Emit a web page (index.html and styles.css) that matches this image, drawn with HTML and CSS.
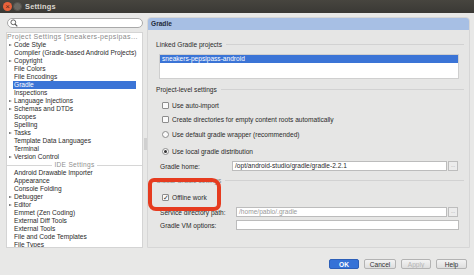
FILE: index.html
```html
<!DOCTYPE html>
<html lang="en">
<head>
  <meta charset="UTF-8">
  <title>Settings</title>
  <link rel="stylesheet" href="styles.css">
</head>
<body>

  <div class="titlebar">
    <span class="wbtn close">&times;</span>
    <span class="wbtn min"></span>
    <span class="title">Settings</span>
  </div>

  <div class="main">
    <div class="side">
      <div class="search">
        <svg width="8" height="8" viewBox="0 0 8 8"><circle cx="3.3" cy="3.3" r="2.4" fill="none" stroke="#555" stroke-width="0.9"/><path d="M5 5 L7.3 7.3" stroke="#555" stroke-width="1.1"/></svg>
      </div>
      <div class="tree">
        <div class="row head">Project Settings [sneakers-pepsipas...</div>
        <div class="row arrow">Code Style</div>
        <div class="row">Compiler (Gradle-based Android Projects)</div>
        <div class="row arrow">Copyright</div>
        <div class="row">File Colors</div>
        <div class="row">File Encodings</div>
        <div class="row sel">Gradle</div>
        <div class="row">Inspections</div>
        <div class="row arrow">Language Injections</div>
        <div class="row arrow">Schemas and DTDs</div>
        <div class="row">Scopes</div>
        <div class="row">Spelling</div>
        <div class="row arrow">Tasks</div>
        <div class="row">Template Data Languages</div>
        <div class="row">Terminal</div>
        <div class="row arrow">Version Control</div>
        <div class="row group"><span>IDE Settings</span></div>
        <div class="row">Android Drawable Importer</div>
        <div class="row">Appearance</div>
        <div class="row">Console Folding</div>
        <div class="row arrow">Debugger</div>
        <div class="row arrow">Editor</div>
        <div class="row">Emmet (Zen Coding)</div>
        <div class="row">External Diff Tools</div>
        <div class="row">External Tools</div>
        <div class="row">File and Code Templates</div>
        <div class="row">File Types</div>
      </div>
      <div class="scroll-thumb"></div>
    </div>

    <div class="panel">
      <div class="panel-head">Gradle</div>
      <div class="panel-body">
        <div class="section">Linked Gradle projects</div>
        <div class="list">
          <div class="list-item">sneakers-pepsipass-android</div>
        </div>

        <div class="section second">Project-level settings</div>
        <div class="opt o1"><span class="box"></span>Use auto-import</div>
        <div class="opt o2"><span class="box"></span>Create directories for empty content roots automatically</div>
        <div class="opt o3"><span class="radio"></span>Use default gradle wrapper (recommended)</div>
        <div class="opt o4"><span class="radio on"></span>Use local gradle distribution</div>
        <div class="field-row home">
          <span class="label">Gradle home:</span>
          <span class="input">/opt/android-studio/gradle/gradle-2.2.1</span>
          <span class="dots">...</span>
        </div>

        <div class="section third">Global Gradle settings</div>
        <div class="opt o5"><span class="box checked">&#10003;</span>Offline work</div>
        <div class="field-row svc">
          <span class="label">Service directory path:</span>
          <span class="input muted">/home/pablo/.gradle</span>
          <span class="dots">...</span>
        </div>
        <div class="field-row vm">
          <span class="label">Gradle VM options:</span>
          <span class="input wide"></span>
        </div>
      </div>
    </div>
  </div>

  <div class="footer">
    <button class="btn ok">OK</button>
    <button class="btn">Cancel</button>
    <button class="btn disabled">Apply</button>
    <button class="btn">Help</button>
  </div>

  <div class="mark"></div>

</body>
</html>
```

FILE: styles.css
```css
* { box-sizing: border-box; margin: 0; padding: 0; }
body {
  font-family: 'Liberation Sans', sans-serif;
  font-size: 6.6px;
  color: #2a2a2a;
  background: #e8e8e7;
  width: 474px;
  height: 275px;
  overflow: hidden;
  position: relative;
}
.titlebar {
  height: 13px;
  background: linear-gradient(#47453f, #3a3935);
  display: flex;
  align-items: center;
  padding-left: 3px;
  gap: 1px;
}
.wbtn {
  width: 9px;
  height: 9px;
  border-radius: 50%;
  display: flex;
  justify-content: center;
  align-items: center;
  font-size: 8px;
  line-height: 1;
  color: #5a2a1a;
}
.wbtn.close { background: #e9623b; }
.wbtn.min { background: #6a6862; border: 1px solid #55534e; }
.title {
  margin-left: 2px;
  color: #dcd9d2;
  font-weight: 700;
  font-size: 7.4px;
  letter-spacing: 0.2px;
}
.main {
  display: flex;
  padding: 4px 4px 0 6px;
  gap: 4px;
  height: 235px;
}
.side {
  width: 137px;
  display: flex;
  flex-direction: column;
  position: relative;
}
.search {
  height: 10px;
  margin: 1px 0 0 1px;
  background: #fff;
  border: 1px solid #a9a9a9;
  border-radius: 5px;
  display: flex;
  align-items: center;
  padding-left: 2px;
}
.tree {
  margin-top: 4px;
  background: #fff;
  border: 1px solid #d4d4d4;
  height: 217px;
  overflow: hidden;
}
.row {
  height: 8px;
  line-height: 8px;
  padding-left: 7px;
  white-space: nowrap;
  position: relative;
}
.row.head {
  padding-left: 0;
  color: #8a8a8a;
  font-size: 7px;
  letter-spacing: 0.35px;
}
.row.arrow::before {
  content: "";
  position: absolute;
  left: 2px;
  top: 2.5px;
  border-left: 3px solid #666;
  border-top: 1.6px solid transparent;
  border-bottom: 1.6px solid transparent;
}
.row.sel {
  background: #3b74d6;
  color: #fff;
  margin: 0 6px 0 6px;
  padding-left: 1px;
}
.row.group {
  display: flex;
  align-items: center;
  padding-left: 0;
  color: #909090;
  letter-spacing: 0.3px;
}
.row.group::before, .row.group::after {
  content: "";
  flex: 1;
  height: 1px;
  background: #d6d6d6;
}
.row.group span { padding: 0 2px; }
.scroll-thumb {
  position: absolute;
  right: -4px;
  top: 121px;
  width: 3px;
  height: 12px;
  background: #d0d0d0;
}
.panel {
  width: 323px;
  height: 231px;
  border: 1px solid #d6d6d6;
  border-radius: 4px 4px 0 0;
  background: #e6e6e5;
}
.panel-head {
  height: 12px;
  line-height: 12px;
  background: #a7bfe4;
  border-radius: 3px 3px 0 0;
  font-weight: 700;
  padding-left: 3px;
  color: #1f2a3a;
}
.panel-body { padding: 10px 5px 0 8px; }
.section {
  display: flex;
  align-items: center;
  height: 8px;
  gap: 4px;
  white-space: nowrap;
}
.section::after {
  content: "";
  flex: 1;
  height: 1px;
  background: #d2d2d2;
}
.section.second { margin-top: 6px; }
.section.third { margin-top: 5px; color: #8b8b8b; }
.list {
  margin: 6px 5px 0 3px;
  height: 25px;
  background: #fff;
  border: 1px solid #cfcfcf;
}
.list-item {
  height: 8px;
  line-height: 8px;
  background: #3b74d6;
  color: #fff;
  padding-left: 2px;
}
.opt {
  display: flex;
  align-items: center;
  height: 9px;
  padding-left: 6px;
  gap: 3px;
}
.o1 { margin-top: 8px; }
.o2 { margin-top: 5px; }
.o3 { margin-top: 6px; }
.o4 { margin-top: 8px; }
.o5 { margin-top: 9px; }
.box, .radio {
  width: 7px;
  height: 7px;
  background: #fafafa;
  border: 1px solid #8d8d8d;
  border-radius: 1px;
  display: flex;
  justify-content: center;
  align-items: center;
  font-size: 7px;
  line-height: 1;
  color: #333;
}
.radio { border-radius: 50%; }
.radio.on::after {
  content: "";
  width: 3px;
  height: 3px;
  border-radius: 50%;
  background: #333;
}
.field-row {
  display: flex;
  align-items: center;
  height: 10px;
  padding-left: 4px;
}
.field-row.home { margin-top: 5px; }
.field-row.svc { margin-top: 5px; }
.field-row.vm { margin-top: 3px; }
.label { white-space: nowrap; }
.home .label { width: 72px; }
.svc .label, .vm .label { width: 76px; }
.input {
  height: 10px;
  line-height: 8px;
  width: 215px;
  background: #fff;
  border: 1px solid #bcbcbc;
  padding-left: 2px;
  white-space: nowrap;
  overflow: hidden;
}
.svc .input { width: 211px; }
.input.muted { color: #9a9a9a; }
.input.wide { width: 223px; }
.dots {
  margin-left: 1px;
  width: 10px;
  height: 10px;
  border: 1px solid #bdbdbd;
  background: #ececec;
  color: #999;
  font-size: 5px;
  text-align: center;
  line-height: 6px;
}
.footer {
  display: flex;
  justify-content: flex-end;
  gap: 5px;
  padding: 11px 7px 0 0;
}
.btn {
  font-family: inherit;
  font-size: 6.6px;
  height: 10px;
  width: 31px;
  border: 1px solid #b3b3b3;
  border-radius: 2px;
  background: linear-gradient(#f3f3f3, #dedede);
  color: #333;
}
.btn.ok {
  width: 30px;
  background: #3572d7;
  border-color: #2c5fb8;
  color: #fff;
  font-weight: 700;
}
.btn:nth-child(2) { width: 32px; }
.btn.disabled { width: 30px; color: #b5b5b5; }
.mark {
  position: absolute;
  left: 148px;
  top: 178px;
  width: 73px;
  height: 33px;
  border: 4px solid #e63b1f;
  border-radius: 6px 9px 7px 8px;
}
```
